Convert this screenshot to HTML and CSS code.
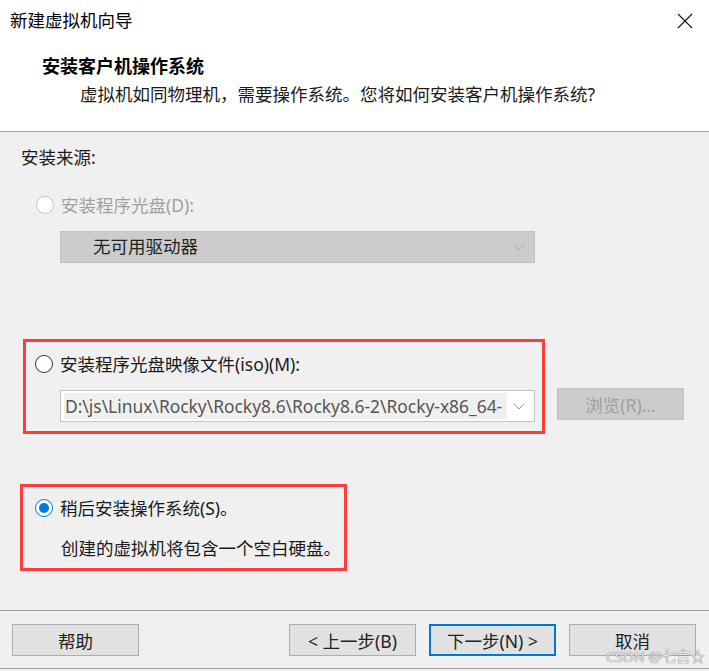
FILE: index.html
```html
<!DOCTYPE html>
<html lang="zh-CN">
<head>
<meta charset="utf-8">
<title>新建虚拟机向导</title>
<link rel="stylesheet" href="styles.css">
</head>
<body>
<div class="dialog">
  <header class="header">
    <div class="titlebar">
      <span class="title">新建虚拟机向导</span>
      <svg class="close" width="16" height="16" viewBox="0 0 16 16"><path d="M1 1 L15 15 M15 1 L1 15" stroke="#111" stroke-width="1.1" fill="none"/></svg>
    </div>
    <div class="heading">安装客户机操作系统</div>
    <div class="subheading">虚拟机如同物理机，需要操作系统。您将如何安装客户机操作系统?</div>
  </header>

  <main class="content">
    <div class="label">安装来源:</div>

    <div class="radio-row first disabled">
      <span class="radio radio-disabled"></span>
      <span class="radio-text">安装程序光盘(D):</span>
    </div>
    <div class="select select-disabled">
      <span class="select-text">无可用驱动器</span>
      <svg class="chevron" width="12" height="7" viewBox="0 0 12 7"><path d="M0.5 0.5 L6 6 L11.5 0.5" stroke="#a8a8a8" stroke-width="1" fill="none"/></svg>
    </div>

    <div class="iso-row">
      <div class="redbox box-iso">
        <div class="radio-row in-iso">
          <span class="radio radio-empty"></span>
          <span class="radio-text">安装程序光盘映像文件(iso)(M):</span>
        </div>
        <div class="select select-input">
          <span class="input-text">D:\js\Linux\Rocky\Rocky8.6\Rocky8.6-2\Rocky-x86_64-</span>
          <svg class="chevron" width="12" height="7" viewBox="0 0 12 7"><path d="M0.5 0.5 L6 6 L11.5 0.5" stroke="#9a9a9a" stroke-width="1" fill="none"/></svg>
        </div>
      </div>
      <div class="btn btn-disabled browse">浏览(R)...</div>
    </div>

    <div class="redbox box-later">
      <div class="radio-row in-later">
        <span class="radio radio-checked"><span class="dot"></span></span>
        <span class="radio-text">稍后安装操作系统(S)。</span>
      </div>
      <div class="note">创建的虚拟机将包含一个空白硬盘。</div>
    </div>
  </main>

  <footer class="footer">
    <div class="btn">帮助</div>
    <div class="btn-group">
      <div class="btn">&lt; 上一步(B)</div>
      <div class="btn btn-default">下一步(N) &gt;</div>
      <div class="btn">取消</div>
    </div>
  </footer>
  <div class="watermark">CSDN @七言☆</div>
</div>
</body>
</html>
```

FILE: styles.css
```css
* { box-sizing: border-box; }
html, body { margin: 0; padding: 0; }
body {
  width: 709px;
  height: 671px;
  overflow: hidden;
  background: #f0f0f0;
  font-family: "Noto Sans", "Noto Sans CJK SC", sans-serif;
  font-size: 17.5px;
  color: #1a1a1a;
}
.dialog {
  position: relative;
  width: 709px;
  height: 671px;
  display: flex;
  flex-direction: column;
}
.header {
  background: #ffffff;
  height: 132px;
  border-bottom: 1px solid #a0a0a0;
  flex: none;
}
.titlebar {
  height: 40px;
  display: flex;
  align-items: center;
  justify-content: space-between;
  padding: 0 16px 0 10px;
}
.title { font-size: 17.5px; line-height: 24px; color: #000; }
.close { display: block; margin-top: 1px; }
.heading {
  margin-left: 42px;
  margin-top: 14px;
  height: 24px;
  line-height: 24px;
  font-weight: 700;
  font-size: 18px;
  color: #000;
}
.subheading {
  margin-left: 80px;
  margin-top: 4px;
  height: 24px;
  line-height: 24px;
  font-size: 17.5px;
  color: #1a1a1a;
}
.content {
  flex: 1;
  display: flex;
  flex-direction: column;
  align-items: flex-start;
}
.label {
  margin: 13px 0 0 21px;
  height: 24px;
  line-height: 24px;
}
.radio-row {
  display: flex;
  align-items: center;
  height: 24px;
  line-height: 24px;
}
.radio-row.first { margin: 24px 0 0 36px; }
.radio-row.disabled .radio-text { color: #a0a0a0; }
.radio {
  width: 18px;
  height: 18px;
  border-radius: 50%;
  background: #fff;
  margin-right: 7px;
  flex: none;
  display: flex;
  align-items: center;
  justify-content: center;
}
.radio-disabled { border: 1px solid #c6c6c6; }
.radio-empty { border: 1.5px solid #333; }
.radio-checked { border: 1.5px solid #0078d7; }
.dot { width: 10px; height: 10px; border-radius: 50%; background: #0078d7; }
.select {
  width: 475px;
  height: 32px;
  display: flex;
  align-items: center;
  justify-content: space-between;
  padding-right: 9px;
}
.select-disabled {
  margin: 14px 0 0 60px;
  background: #cccccc;
  border: 1px solid #bfbfbf;
}
.select-text { margin-left: 32px; color: #222; line-height: 24px; margin-top: -3px; }
.select-input {
  margin: 14px 0 0 34px;
  background: #fff;
  border: 1px solid #c4c4c4;
  padding-left: 3px;
}
.input-text {
  background: #f0f0f0;
  color: #555;
  width: 443px;
  height: 26px;
  line-height: 26px;
  overflow: hidden;
  white-space: nowrap;
  font-size: 17.4px;
  letter-spacing: 0;
  padding-left: 1px;
}
.chevron { flex: none; display: block; }
.iso-row {
  display: flex;
  align-items: flex-start;
  margin-top: 76px;
}
.redbox { border: 3px solid #ff3b3b; }
.box-iso {
  margin-left: 23px;
  width: 522px;
  height: 95px;
}
.radio-row.in-iso { margin: 10px 0 0 9px; }
.browse {
  margin: 49px 0 0 12px;
  width: 127px;
  height: 36px;
}
.box-later {
  margin: 50px 0 0 20px;
  width: 327px;
  height: 87px;
}
.radio-row.in-later { margin: 9px 0 0 12px; }
.note {
  margin: 16px 0 0 38px;
  height: 24px;
  line-height: 24px;
}
.footer {
  flex: none;
  height: 59px;
  margin-bottom: 2px;
  border-top: 1px solid #a0a0a0;
  border-bottom: 1px solid #a0a0a0;
  display: flex;
  align-items: flex-start;
  justify-content: space-between;
  padding: 13px 13px 0 12px;
}
.btn-group { display: flex; gap: 13px; }
.btn {
  width: 127px;
  height: 32px;
  background: #e1e1e1;
  border: 1px solid #adadad;
  display: flex;
  align-items: center;
  justify-content: center;
  font-size: 17.5px;
  color: #222;
}
.btn-default { border: 2px solid #0078d7; }
.btn-disabled {
  background: #cccccc;
  border: 1px solid #bfbfbf;
  color: #a0a0a0;
}
.watermark {
  position: absolute;
  right: 4px;
  bottom: 7px;
  font-size: 14.5px;
  line-height: 16px;
  color: rgba(255, 255, 255, 0.85);
  text-shadow: 0 0 1px #777, 0 0 1px #777;
}
```
